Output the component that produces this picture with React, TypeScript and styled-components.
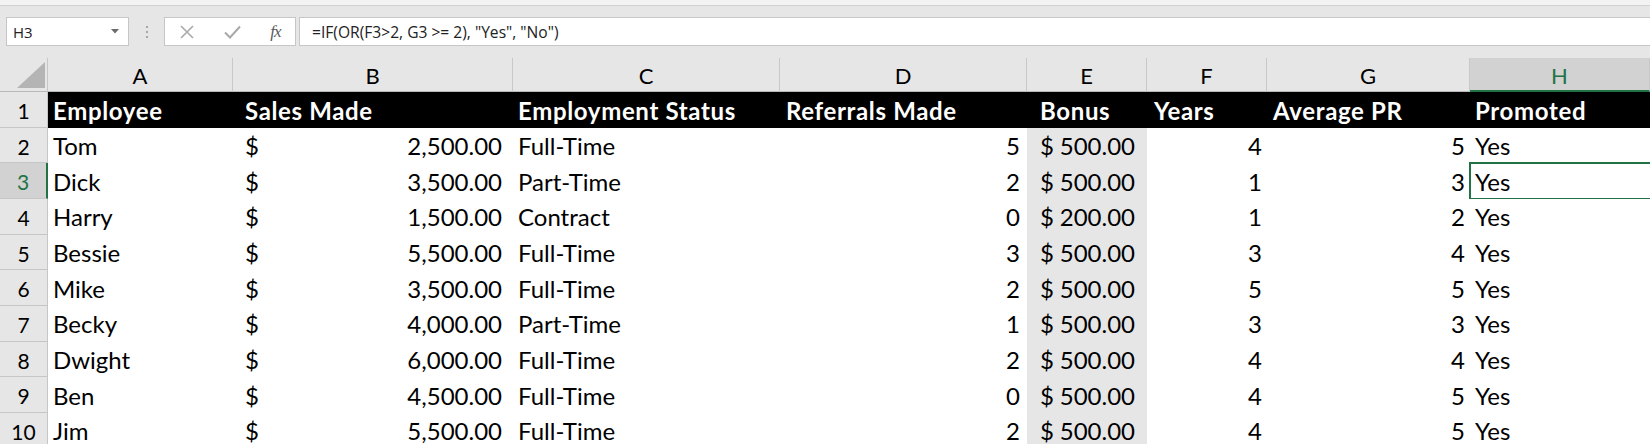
import React from 'react'
import styled, { createGlobalStyle, css } from 'styled-components'

const GlobalStyle = createGlobalStyle`
  html, body {
    margin: 0;
    padding: 0;
    background: #ffffff;
  }
  body {
    overflow: hidden;
    font-family: Lato, "Liberation Sans", sans-serif;
  }
`

const GREEN = '#217346'

const Window = styled.div`
  width: 1650px;
  height: 444px;
  overflow: hidden;
  display: flex;
  flex-direction: column;
`

const RibbonEdge = styled.div`
  height: 5px;
  flex-shrink: 0;
  background: #f3f3f3;
  border-bottom: 1px solid #d2d2d2;
`

const FormulaBar = styled.div`
  height: 52px;
  flex-shrink: 0;
  box-sizing: border-box;
  padding-top: 11px;
  display: flex;
  align-items: flex-start;
  background: #e6e6e6;
  font-family: "Open Sans", "Noto Sans", sans-serif;
  color: #222;
`

const Box = styled.div`
  height: 29px;
  box-sizing: border-box;
  background: #ffffff;
  border: 1px solid #c6c6c6;
  display: flex;
  align-items: center;
`

const NameBox = styled(Box)`
  margin-left: 6px;
  width: 123px;
  padding: 0 9px 0 6px;
  justify-content: space-between;
  font-size: 15px;
`

const Grip = styled.div`
  width: 35px;
  height: 29px;
  display: flex;
  flex-direction: column;
  align-items: center;
  justify-content: center;
  gap: 3px;
`

const GripDot = styled.span`
  width: 2px;
  height: 2px;
  background: #a6a6a6;
`

const ActionBox = styled(Box)`
  width: 132px;
  justify-content: space-around;
`

const FxLabel = styled.span`
  font-family: "Liberation Serif", "DejaVu Serif", serif;
  font-style: italic;
  font-size: 17px;
  color: #5a5a5a;
  letter-spacing: -1px;
`

const FormulaInput = styled(Box)`
  flex: 1;
  margin-left: 3px;
  border-right: none;
  padding-left: 12px;
  font-size: 15.6px;
  white-space: nowrap;
`

const Sheet = styled.div`
  display: grid;
  grid-template-columns: 48px 185px 280px 267px 247px 120px 120px 203px 180px;
  grid-template-rows: 34px repeat(10, 35.67px);
`

const Corner = styled.div`
  background: #e6e6e6;
  border-right: 1px solid #c6c6c6;
  border-bottom: 1px solid #b8b8b8;
  box-sizing: border-box;
  display: flex;
  align-items: flex-end;
  justify-content: flex-end;
  padding: 0 2px 3px 0;
`

const ColHead = styled.div<{ $active?: boolean }>`
  box-sizing: border-box;
  background: ${p => (p.$active ? '#d2d2d2' : '#e6e6e6')};
  color: ${p => (p.$active ? GREEN : '#000')};
  border-right: 1px solid #c8c8c8;
  border-bottom: ${p => (p.$active ? `2px solid ${GREEN}` : '1px solid #b8b8b8')};
  font-size: 22px;
  line-height: 34px;
  padding-top: 1px;
  text-align: center;
`

const RowHead = styled.div<{ $active?: boolean }>`
  box-sizing: border-box;
  background: ${p => (p.$active ? '#d2d2d2' : '#e6e6e6')};
  color: ${p => (p.$active ? GREEN : '#000')};
  border-bottom: 1px solid #c6c6c6;
  border-right: ${p => (p.$active ? `2px solid ${GREEN}` : '1px solid #c6c6c6')};
  font-size: 21px;
  line-height: 35px;
  padding-top: 1px;
  text-align: center;
`

const Cell = styled.div<{
  $head?: boolean
  $shaded?: boolean
  $selected?: boolean
  $align: 'left' | 'right' | 'split'
  $pl: number
  $pr: number
}>`
  position: relative;
  box-sizing: border-box;
  display: flex;
  justify-content: ${p =>
    p.$align === 'right' ? 'flex-end' : p.$align === 'split' ? 'space-between' : 'flex-start'};
  padding: 1.5px ${p => p.$pr}px 0 ${p => p.$pl}px;
  font-size: 24px;
  line-height: 34px;
  white-space: nowrap;
  color: #000;
  background: ${p => (p.$shaded ? '#e7e6e6' : '#ffffff')};
  ${p =>
    p.$head &&
    css`
      background: #000;
      color: #fff;
      font-weight: 700;
      letter-spacing: 0.65px;
    `}
  ${p =>
    p.$selected &&
    css`
      &::after {
        content: '';
        position: absolute;
        inset: -1px -2px -1px -1px;
        border: 2px solid ${GREEN};
        pointer-events: none;
      }
    `}
`

type Col = {
  letter: string
  title: string
  pl: number
  pr: number
  align: 'left' | 'right' | 'split'
  shaded?: boolean
}

const columns: Col[] = [
  { letter: 'A', title: 'Employee', pl: 5, pr: 5, align: 'left' },
  { letter: 'B', title: 'Sales Made', pl: 12, pr: 11, align: 'split' },
  { letter: 'C', title: 'Employment Status', pl: 5, pr: 5, align: 'left' },
  { letter: 'D', title: 'Referrals Made', pl: 6, pr: 7, align: 'right' },
  { letter: 'E', title: 'Bonus', pl: 13, pr: 12, align: 'split', shaded: true },
  { letter: 'F', title: 'Years', pl: 7, pr: 5, align: 'right' },
  { letter: 'G', title: 'Average PR', pl: 6, pr: 5, align: 'right' },
  { letter: 'H', title: 'Promoted', pl: 5, pr: 5, align: 'left' },
]

const rows: (string | number)[][] = [
  ['Tom', '2,500.00', 'Full-Time', 5, '500.00', 4, 5, 'Yes'],
  ['Dick', '3,500.00', 'Part-Time', 2, '500.00', 1, 3, 'Yes'],
  ['Harry', '1,500.00', 'Contract', 0, '200.00', 1, 2, 'Yes'],
  ['Bessie', '5,500.00', 'Full-Time', 3, '500.00', 3, 4, 'Yes'],
  ['Mike', '3,500.00', 'Full-Time', 2, '500.00', 5, 5, 'Yes'],
  ['Becky', '4,000.00', 'Part-Time', 1, '500.00', 3, 3, 'Yes'],
  ['Dwight', '6,000.00', 'Full-Time', 2, '500.00', 4, 4, 'Yes'],
  ['Ben', '4,500.00', 'Full-Time', 0, '500.00', 4, 5, 'Yes'],
  ['Jim', '5,500.00', 'Full-Time', 2, '500.00', 4, 5, 'Yes'],
]

// active cell is H3
const ACTIVE_ROW = 3
const ACTIVE_COL = 'H'

const App = () => {
  return (
    <Window>
      <GlobalStyle />
      <RibbonEdge />
      <FormulaBar>
        <NameBox>
          <span>H3</span>
          <svg width="8" height="5" viewBox="0 0 8 5">
            <path d="M0 0 L8 0 L4 4.5 Z" fill="#6b6b6b" />
          </svg>
        </NameBox>
        <Grip>
          <GripDot />
          <GripDot />
          <GripDot />
        </Grip>
        <ActionBox>
          <svg width="16" height="16" viewBox="0 0 16 16">
            <path d="M2 2 L14 14 M14 2 L2 14" stroke="#a9a9a9" strokeWidth="1.6" />
          </svg>
          <svg width="17" height="14" viewBox="0 0 17 14">
            <path d="M1 7.5 L6 12.5 L16 1.5" stroke="#a9a9a9" strokeWidth="2" fill="none" />
          </svg>
          <FxLabel>fx</FxLabel>
        </ActionBox>
        <FormulaInput>=IF(OR(F3&gt;2, G3 &gt;= 2), "Yes", "No")</FormulaInput>
      </FormulaBar>

      <Sheet>
        <Corner>
          <svg width="28" height="26" viewBox="0 0 28 26">
            <path d="M28 0 L28 26 L0 26 Z" fill="#b4b4b4" />
          </svg>
        </Corner>
        {columns.map(c => (
          <ColHead key={c.letter} $active={c.letter === ACTIVE_COL}>
            {c.letter}
          </ColHead>
        ))}

        <RowHead>1</RowHead>
        {columns.map(c => (
          <Cell key={c.letter} $head $align="left" $pl={c.pl} $pr={c.pr}>
            {c.title}
          </Cell>
        ))}

        {rows.map((r, i) => {
          const rowNo = i + 2
          return (
            <React.Fragment key={rowNo}>
              <RowHead $active={rowNo === ACTIVE_ROW}>{rowNo}</RowHead>
              {columns.map((c, j) => {
                const v = r[j]
                const split = c.align === 'split'
                return (
                  <Cell
                    key={c.letter}
                    $align={c.align}
                    $pl={c.pl}
                    $pr={c.pr}
                    $shaded={c.shaded}
                    $selected={rowNo === ACTIVE_ROW && c.letter === ACTIVE_COL}
                  >
                    {split ? (
                      <>
                        <span>$</span>
                        <span>{v}</span>
                      </>
                    ) : (
                      v
                    )}
                  </Cell>
                )
              })}
            </React.Fragment>
          )
        })}
      </Sheet>
    </Window>
  )
}

export default App
